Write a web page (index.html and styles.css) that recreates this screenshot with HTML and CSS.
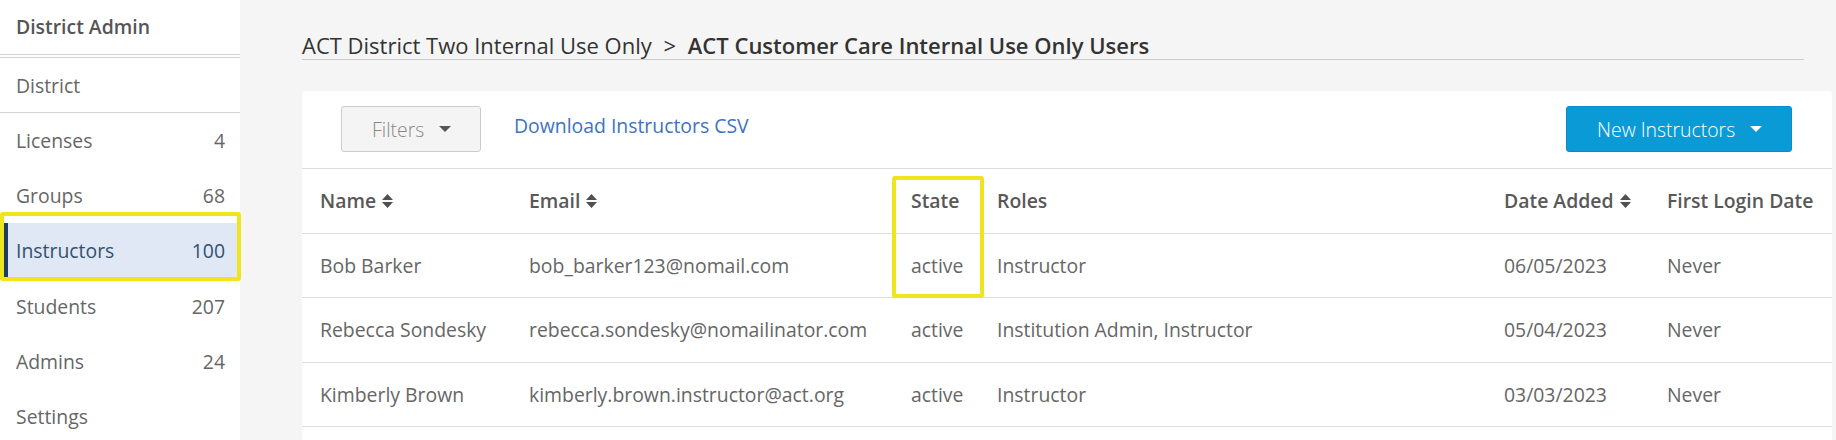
FILE: index.html
```html
<!DOCTYPE html>
<html lang="en">
<head>
    <meta charset="UTF-8">
    <meta name="viewport" content="width=device-width, initial-scale=1.0">
    <title>Instructors</title>
    <link rel="stylesheet" href="styles.css">
</head>
<body>
    <div class="sidebar">
        <div class="side-title">District Admin</div>
        <a class="side-item first">District</a>
        <a class="side-item">Licenses <span>4</span></a>
        <a class="side-item">Groups <span>68</span></a>
        <a class="side-item active">Instructors <span>100</span><i class="mark side-mark"></i></a>
        <a class="side-item">Students <span>207</span></a>
        <a class="side-item">Admins <span>24</span></a>
        <a class="side-item">Settings</a>
    </div>

    <div class="main">
        <div class="crumbs">
            <span>ACT District Two Internal Use Only</span>
            <span class="sep">&gt;</span>
            <strong>ACT Customer Care Internal Use Only Users</strong>
        </div>

        <div class="card">
            <div class="toolbar">
                <button class="btn-filter">Filters <i class="caret"></i></button>
                <a class="csv" href="#">Download Instructors CSV</a>
                <button class="btn-new">New Instructors <i class="caret"></i></button>
            </div>

            <table>
                <colgroup>
                    <col style="width:209px">
                    <col style="width:382px">
                    <col style="width:86px">
                    <col style="width:507px">
                    <col style="width:163px">
                    <col style="width:183px">
                </colgroup>
                <thead>
                    <tr>
                        <th>Name <svg class="sort" width="11" height="16" viewBox="0 0 11 16"><path d="M0 7 L5.5 1 L11 7 Z M0 9 L5.5 15 L11 9 Z"/></svg></th>
                        <th>Email <svg class="sort" width="11" height="16" viewBox="0 0 11 16"><path d="M0 7 L5.5 1 L11 7 Z M0 9 L5.5 15 L11 9 Z"/></svg></th>
                        <th class="state">State<i class="mark state-mark"></i></th>
                        <th>Roles</th>
                        <th>Date Added <svg class="sort" width="11" height="16" viewBox="0 0 11 16"><path d="M0 7 L5.5 1 L11 7 Z M0 9 L5.5 15 L11 9 Z"/></svg></th>
                        <th>First Login Date</th>
                    </tr>
                </thead>
                <tbody>
                    <tr>
                        <td>Bob Barker</td>
                        <td>bob_barker123@nomail.com</td>
                        <td>active</td>
                        <td>Instructor</td>
                        <td>06/05/2023</td>
                        <td>Never</td>
                    </tr>
                    <tr>
                        <td>Rebecca Sondesky</td>
                        <td>rebecca.sondesky@nomailinator.com</td>
                        <td>active</td>
                        <td>Institution Admin, Instructor</td>
                        <td>05/04/2023</td>
                        <td>Never</td>
                    </tr>
                    <tr>
                        <td>Kimberly Brown</td>
                        <td>kimberly.brown.instructor@act.org</td>
                        <td>active</td>
                        <td>Instructor</td>
                        <td>03/03/2023</td>
                        <td>Never</td>
                    </tr>
                    <tr>
                        <td>&nbsp;</td><td></td><td></td><td></td><td></td><td></td>
                    </tr>
                </tbody>
            </table>
        </div>
    </div>
</body>
</html>
```

FILE: styles.css
```css
body {
    margin: 0;
    display: flex;
    font-family: "Open Sans", "Liberation Sans", sans-serif;
    font-size: 19.4px;
    color: #666;
    background-color: #f5f5f5;
    min-height: 100vh;
    overflow: hidden;
}
.sidebar {
    width: 240px;
    flex-shrink: 0;
    background: white;
}
.side-title {
    height: 54px;
    line-height: 54px;
    padding-left: 16px;
    font-weight: 600;
    color: #555;
    border-bottom: 1px solid #d4d4d4;
    margin-bottom: 2px;
}
.side-item {
    position: relative;
    display: flex;
    justify-content: space-between;
    align-items: center;
    height: 55.2px;
    padding: 0 15px 0 16px;
    color: #666;
    text-decoration: none;
}
.side-item.first {
    height: 54px;
    border-top: 1px solid #d4d4d4;
    border-bottom: 1px solid #d4d4d4;
}
.side-item.active {
    background: #dfe8f4;
    color: #34506f;
    border-left: 8px solid #1d3e63;
    padding-left: 8px;
}
.mark {
    position: absolute;
    border: 4px solid #eee51c;
    border-radius: 3px;
    box-sizing: border-box;
}
.side-mark {
    top: -11px;
    left: -8px;
    width: 241px;
    height: 69px;
}
.main {
    flex: 1;
    padding: 0 4px 0 62px;
}
.crumbs {
    margin: 31px 28px 0 0;
    height: 28px;
    line-height: 28px;
    font-size: 22px;
    color: #333;
    border-bottom: 1px solid #ccc;
    white-space: nowrap;
}
.crumbs .sep {
    margin: 0 6px;
}
.crumbs strong {
    font-weight: 600;
}
.card {
    margin-top: 31px;
    background: white;
    border-radius: 3px;
}
.toolbar {
    display: flex;
    align-items: center;
    padding: 15px 40px 16px 39px;
    border-bottom: 1px solid #ddd;
}
button {
    font-family: inherit;
    font-size: 19.4px;
    font-weight: 300;
    height: 46px;
    border-radius: 3px;
    cursor: pointer;
    display: flex;
    align-items: center;
}
.btn-filter {
    width: 140px;
    padding: 0 0 0 30px;
    background: #f4f4f4;
    border: 1px solid #ccc;
    color: #888;
}
.btn-filter .caret {
    margin-left: 15px;
    border-top-color: #555;
}
.caret {
    display: inline-block;
    width: 0;
    height: 0;
    border-left: 6px solid transparent;
    border-right: 6px solid transparent;
    border-top: 6px solid white;
}
.csv {
    margin-left: 33px;
    margin-top: -8px;
    color: #3c73c2;
    text-decoration: none;
}
.btn-new {
    margin-left: auto;
    width: 226px;
    padding: 0 0 0 30px;
    background: #0a9bd7;
    border: 1px solid #0a8cc4;
    color: white;
}
.btn-new .caret {
    margin-left: 15px;
}
table {
    width: 100%;
    table-layout: fixed;
    border-collapse: collapse;
}
th, td {
    height: 63.6px;
    padding: 0 0 0 18px;
    text-align: left;
    vertical-align: middle;
    border-bottom: 1px solid #ddd;
    white-space: nowrap;
}
th {
    font-weight: 600;
    color: #585858;
}
th.state {
    position: relative;
}
.state-mark {
    top: 7px;
    left: -1px;
    width: 92px;
    height: 122px;
}
.sort {
    vertical-align: -1px;
    margin-left: 1px;
    fill: #505050;
}
```
